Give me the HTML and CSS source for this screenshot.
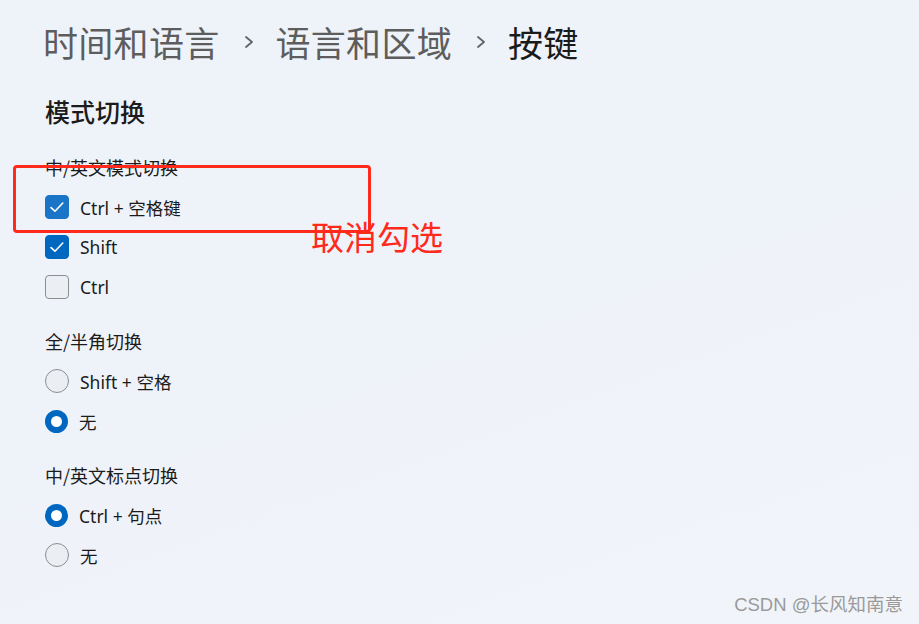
FILE: index.html
```html
<!DOCTYPE html>
<html lang="zh-CN">
<head>
<meta charset="utf-8">
<link rel="stylesheet" href="styles.css">
</head>
<body>
<div class="page">
  <div class="crumbs">
    <span class="crumb">时间和语言</span>
    <svg class="chev" width="14" height="16" viewBox="0 0 14 16"><path d="M4 3 L10 8 L4 13" fill="none" stroke="#5f6368" stroke-width="1.8" stroke-linecap="round" stroke-linejoin="round"/></svg>
    <span class="crumb">语言和区域</span>
    <svg class="chev" width="14" height="16" viewBox="0 0 14 16"><path d="M4 3 L10 8 L4 13" fill="none" stroke="#5f6368" stroke-width="1.8" stroke-linecap="round" stroke-linejoin="round"/></svg>
    <span class="crumb current">按键</span>
  </div>

  <h2 class="section">模式切换</h2>

  <div class="group">
    <div class="glabel">中/英文模式切换</div>
    <div class="row"><span class="cb on hover"><svg width="20" height="20" viewBox="0 0 20 20"><path d="M4 10.6 L8 14.2 L15.8 6" fill="none" stroke="#fff" stroke-width="1.6" stroke-linecap="round" stroke-linejoin="round"/></svg></span><span class="lbl">Ctrl + 空格键</span></div>
    <div class="row"><span class="cb on"><svg width="20" height="20" viewBox="0 0 20 20"><path d="M4 10.6 L8 14.2 L15.8 6" fill="none" stroke="#fff" stroke-width="1.6" stroke-linecap="round" stroke-linejoin="round"/></svg></span><span class="lbl">Shift</span></div>
    <div class="row"><span class="cb"></span><span class="lbl">Ctrl</span></div>
  </div>

  <div class="group">
    <div class="glabel">全/半角切换</div>
    <div class="row"><span class="rd"></span><span class="lbl">Shift + 空格</span></div>
    <div class="row"><span class="rd on"></span><span class="lbl">无</span></div>
  </div>

  <div class="group">
    <div class="glabel">中/英文标点切换</div>
    <div class="row"><span class="rd on"></span><span class="lbl">Ctrl + 句点</span></div>
    <div class="row"><span class="rd"></span><span class="lbl">无</span></div>
  </div>
</div>

<div class="annot-box"></div>
<div class="annot-text">取消勾选</div>
<div class="watermark">CSDN @长风知南意</div>
</body>
</html>
```

FILE: styles.css
```css
html, body {
  margin: 0;
  padding: 0;
}
body {
  width: 919px;
  height: 624px;
  overflow: hidden;
  background: linear-gradient(160deg, #eef3f9 0%, #eff3f9 60%, #f1f4f9 100%);
  font-family: "Noto Sans", "Noto Sans CJK SC", sans-serif;
  color: #1b1b1b;
  position: relative;
}
.page {
  padding: 20px 0 0 43px;
}
.crumbs {
  display: flex;
  align-items: center;
  height: 44px;
}
.crumb {
  font-family: "Noto Sans CJK SC", sans-serif;
  font-size: 35px;
  line-height: 44px;
  color: #5d5d5d;
  letter-spacing: 0.3px;
}
.crumb.current {
  color: #1b1b1b;
}
.chev {
  margin: 0 20px 0 22px;
}
.section {
  margin: 31px 0 0 2px;
  font-family: "Noto Sans CJK SC", sans-serif;
  font-weight: 500;
  font-size: 25px;
  line-height: 32px;
  color: #1b1b1b;
}
.group {
  margin: 28px 0 0 2px;
}
.group + .group {
  margin-top: 22px;
}
.glabel {
  font-family: "Noto Sans CJK SC", sans-serif;
  font-size: 18px;
  line-height: 24px;
  color: #1b1b1b;
  margin-bottom: 8px;
}
.row {
  display: flex;
  align-items: center;
  height: 40px;
}
.lbl {
  font-size: 17.5px;
  margin-left: 11px;
  color: #1b1b1b;
}
.cb {
  width: 22px;
  height: 22px;
  border: 1px solid #8b8d90;
  border-radius: 4px;
  background: #ebeef2;
  display: flex;
  align-items: center;
  justify-content: center;
}
.cb.on {
  background: #0067c0;
  border-color: #0067c0;
}
.cb.on.hover {
  background: #1a75c9;
  border-color: #1a75c9;
}
.rd {
  width: 22px;
  height: 22px;
  border: 1px solid #8b8d90;
  border-radius: 50%;
  background: #ebeef2;
  box-sizing: content-box;
}
.rd.on {
  width: 11px;
  height: 11px;
  border: 6.5px solid #0067c0;
  background: #ffffff;
}
.annot-box {
  position: absolute;
  left: 13px;
  top: 165px;
  width: 352px;
  height: 62px;
  border: 3px solid #ff2a1c;
  border-radius: 4px;
}
.annot-text {
  position: absolute;
  left: 311px;
  top: 216px;
  font-family: "Noto Sans CJK SC", sans-serif;
  font-size: 33px;
  line-height: 40px;
  color: #ff2a1c;
}
.watermark {
  position: absolute;
  right: 16px;
  top: 592px;
  font-family: "Liberation Sans", "Noto Sans CJK SC", sans-serif;
  font-size: 18.5px;
  line-height: 26px;
  color: #9a9a9a;
}
```
